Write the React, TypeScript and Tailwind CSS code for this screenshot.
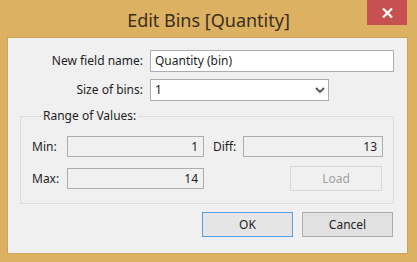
import React from "react";

const font = { fontFamily: '"Noto Sans", "Open Sans", sans-serif' };

function Field({ value, className = "" }: { value: string; className?: string }) {
  return (
    <div
      className={`h-[21px] border border-[#adadad] bg-[#f0f0f0] flex items-center justify-end pr-[5px] text-[12px] text-[#1e1e1e] ${className}`}
    >
      {value}
    </div>
  );
}

export default function App() {
  return (
    <div className="w-[417px] h-[262px] bg-[#ddb162] flex flex-col" style={font}>
      {/* title bar */}
      <div className="relative h-[37px] shrink-0 flex items-center justify-center">
        <span className="text-[18px] text-[#3b2f1c] pt-[3px] leading-none">Edit Bins [Quantity]</span>
        <button className="absolute right-[10px] top-0 w-[40px] h-[25px] bg-[#c75050] flex items-center justify-center">
          <svg width="11" height="10" viewBox="0 0 11 10">
            <path d="M1 0.5 L10 9.5 M10 0.5 L1 9.5" stroke="#fff" strokeWidth="2.2" />
          </svg>
        </button>
      </div>

      {/* client area */}
      <div className="mx-[7px] w-[401px] h-[217px] shrink-0 bg-[#f0f0f0] border border-[#c9a45a] flex flex-col text-[12px] text-[#1e1e1e]">
        <div className="flex items-center mt-[12px]">
          <span className="w-[135px] text-right">New field name:</span>
          <div className="ml-[7px] w-[244px] h-[22px] border border-[#abadb3] bg-white flex items-center pl-[4px]">
            Quantity (bin)
          </div>
        </div>
        <div className="flex items-center mt-[7px]">
          <span className="w-[135px] text-right">Size of bins:</span>
          <div className="ml-[7px] w-[179px] h-[22px] border border-[#abadb3] bg-white flex items-center justify-between pl-[4px] pr-[3px]">
            <span>1</span>
            <svg width="10" height="7" viewBox="0 0 10 7">
              <path d="M1 1 L5 5 L9 1" stroke="#555" strokeWidth="1.8" fill="none" />
            </svg>
          </div>
        </div>

        <fieldset className="ml-[12px] mt-[7px] w-[374px] h-[96px] border border-[#dcdcdc] m-0 p-0 pl-[11px] min-w-0">
          <legend className="ml-[9px] px-[2px] leading-[16px]">Range of Values:</legend>
          <div className="flex items-center mt-[12px]">
            <span className="w-[35px]">Min:</span>
            <Field value="1" className="w-[137px]" />
            <span className="ml-[9px] w-[30px]">Diff:</span>
            <Field value="13" className="w-[140px]" />
          </div>
          <div className="flex items-center mt-[9px]">
            <span className="w-[35px]">Max:</span>
            <Field value="14" className="w-[137px]" />
            <button className="ml-[86px] w-[92px] h-[25px] border border-[#d9d9d9] bg-[#f0f0f0] text-[#a0a0a0] text-[12px]">
              Load
            </button>
          </div>
        </fieldset>

        <div className="flex justify-end gap-[9px] mt-[8px] mr-[14px]">
          <button className="w-[91px] h-[25px] border border-[#5b9be1] bg-[#e5e5e5] text-[12px] text-[#1e1e1e]">
            OK
          </button>
          <button className="w-[91px] h-[25px] border border-[#adadad] bg-[#e1e1e1] text-[12px] text-[#1e1e1e]">
            Cancel
          </button>
        </div>
      </div>
    </div>
  );
}
